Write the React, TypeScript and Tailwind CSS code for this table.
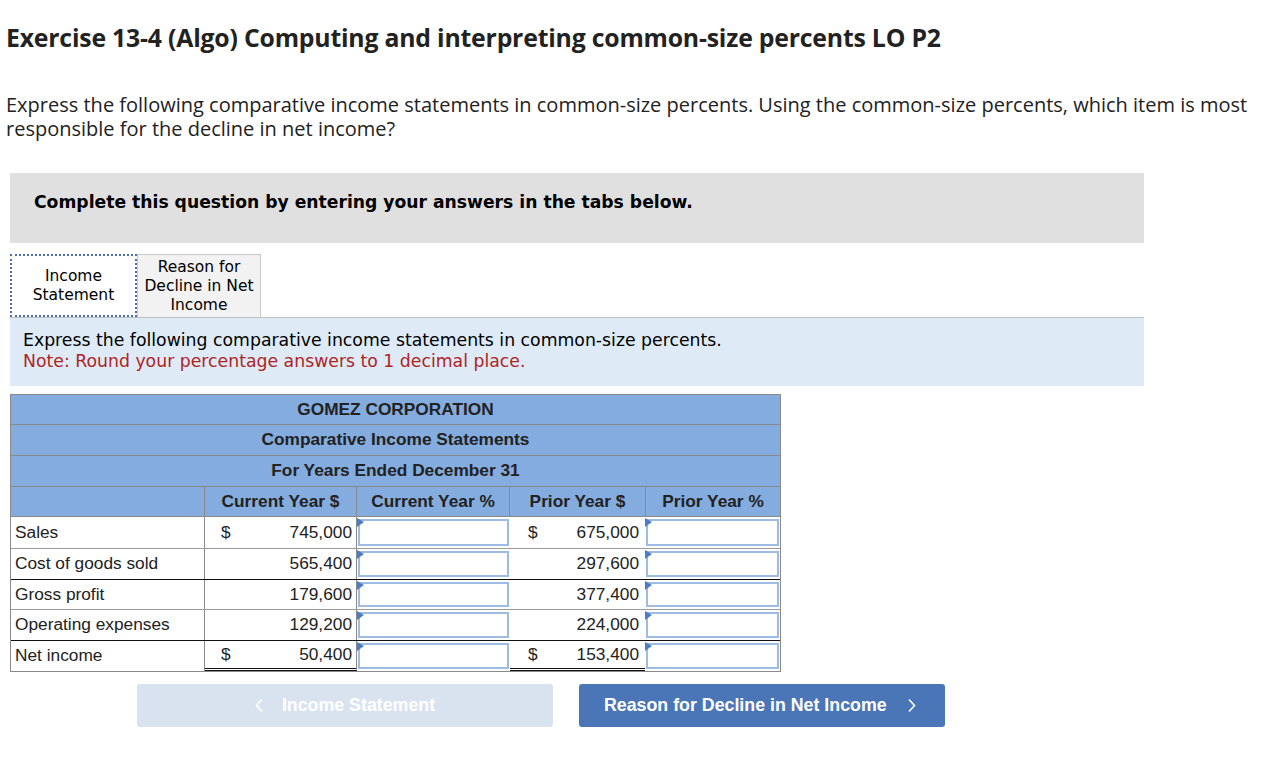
import React from 'react';

type Row = {
  label: string;
  cur: string;
  prior: string;
  dollar?: boolean;
  thickTop?: boolean;
  thickBottom?: boolean;
  short?: boolean;
};

const rows: Row[] = [
  { label: 'Sales', cur: '745,000', prior: '675,000', dollar: true },
  { label: 'Cost of goods sold', cur: '565,400', prior: '297,600' },
  { label: 'Gross profit', cur: '179,600', prior: '377,400', thickTop: true, short: true },
  { label: 'Operating expenses', cur: '129,200', prior: '224,000' },
  { label: 'Net income', cur: '50,400', prior: '153,400', dollar: true, thickTop: true, thickBottom: true },
];

const AnswerBox = () => (
  <div className="relative h-full p-[1px]">
    <div className="h-full border-2 border-[#9dbbe3] bg-white"></div>
    <svg className="absolute left-0 top-0" width="7" height="9" viewBox="0 0 7 9">
      <polygon points="0,0 7,4 0,9" fill="#4a7dc4" />
    </svg>
  </div>
);

const Chevron = ({ dir }: { dir: 'left' | 'right' }) => (
  <svg width="9" height="15" viewBox="0 0 9 15" fill="none" stroke="currentColor" strokeWidth="1.6">
    {dir === 'left' ? <polyline points="7,1.5 1.5,7.5 7,13.5" /> : <polyline points="2,1.5 7.5,7.5 2,13.5" />}
  </svg>
);

const App: React.FC = () => {
  return (
    <div className="w-[1270px] h-[770px] bg-white text-black" style={{ fontFamily: '"Open Sans", sans-serif' }}>
      <div className="pt-[22px] pl-[6px]">
        <h1 className="text-[24.8px] font-bold leading-[30px] text-[#222] tracking-[-0.2px]">
          Exercise 13-4 (Algo) Computing and interpreting common-size percents LO P2
        </h1>
        <p className="mt-[41px] text-[20px] leading-[24px] text-[#222] pr-[10px]">
          Express the following comparative income statements in common-size percents. Using the common-size percents, which item is most responsible for the decline in net income?
        </p>
      </div>

      <div className="ml-[10px] w-[1134px] mt-[32px]">
        <div className="h-[70px] bg-[#e0e0e0] pl-[24px] pt-[17px]">
          <span className="text-[17.2px] leading-[22px] font-bold text-black" style={{ fontFamily: '"DejaVu Sans", Verdana, sans-serif' }}>
            Complete this question by entering your answers in the tabs below.
          </span>
        </div>

        <div className="mt-[11px] flex items-end" style={{ fontFamily: '"DejaVu Sans", Verdana, sans-serif' }}>
          <div className="w-[127px] h-[63px] border-2 border-dotted border-[#4a6fb5] bg-white flex items-center justify-center text-center text-[15.5px] leading-[19px] text-black">
            Income<br />Statement
          </div>
          <div className="w-[124px] h-[63px] border border-[#c8c8c8] border-b-0 bg-[#f2f2f2] flex items-center justify-center text-center text-[15.5px] leading-[19px] text-black">
            Reason for<br />Decline in Net<br />Income
          </div>
        </div>

        <div className="h-[69px] bg-[#deebf7] border-t border-[#c0c0c0] pl-[13px] pt-[12px] text-[17.3px] leading-[21px]" style={{ fontFamily: '"DejaVu Sans", Verdana, sans-serif' }}>
          <div className="text-black">Express the following comparative income statements in common-size percents.</div>
          <div className="text-[#b0231e]">Note: Round your percentage answers to 1 decimal place.</div>
        </div>
      </div>

      <div className="ml-[10px] mt-[8px] w-[771px] text-[17.3px] text-[#222]" style={{ fontFamily: '"Liberation Sans", Arial, sans-serif' }}>
        <div className="border border-[#8a8a8a] bg-[#84acdf] font-bold">
          <div className="h-[30px] flex items-center justify-center border-b border-[#8a8a8a]">GOMEZ CORPORATION</div>
          <div className="h-[31px] flex items-center justify-center border-b border-[#8a8a8a]">Comparative Income Statements</div>
          <div className="h-[31px] flex items-center justify-center border-b border-[#8a8a8a]">For Years Ended December 31</div>
          <div className="h-[29px] grid grid-cols-[194px_152px_153px_135px_135px]">
            <div className="border-r border-[#8a8a8a]"></div>
            <div className="flex items-center justify-center border-r border-[#8a8a8a]">Current Year $</div>
            <div className="flex items-center justify-center border-r border-[#8a8a8a]">Current Year %</div>
            <div className="flex items-center justify-center">Prior Year $</div>
            <div className="flex items-center justify-center border-l border-[#8a8a8a]">Prior Year %</div>
          </div>
        </div>
        <div className="border-x border-b border-[#8a8a8a]">
          {rows.map((r, i) => (
            <div
              key={r.label}
              className={`${r.short ? 'h-[30px]' : 'h-[31px]'} grid grid-cols-[194px_152px_153px_135px_135px] ${i > 0 ? 'border-t' : ''} ${r.thickTop ? 'border-t-[#111]' : 'border-t-[#9a9a9a]'}`}
            >
              <div className="flex items-center pl-[4px] border-r border-[#8a8a8a]">{r.label}</div>
              <div className={`flex items-center justify-between pl-[16px] pr-[4px] border-r border-[#8a8a8a] ${r.thickBottom ? 'border-b-[3px] border-b-[#111] border-double' : ''}`}>
                <span>{r.dollar ? '$' : ''}</span>
                <span>{r.cur}</span>
              </div>
              <div className="py-[1px]">
                <AnswerBox />
              </div>
              <div className={`flex items-center justify-between pl-[18px] pr-[6px] ${r.thickBottom ? 'border-b-[3px] border-b-[#111] border-double' : ''}`}>
                <span>{r.dollar ? '$' : ''}</span>
                <span>{r.prior}</span>
              </div>
              <div className="py-[1px]">
                <AnswerBox />
              </div>
            </div>
          ))}
        </div>
      </div>

      <div className="mt-[12px] flex" style={{ fontFamily: '"Liberation Sans", Arial, sans-serif' }}>
        <button className="ml-[137px] w-[416px] h-[43px] rounded-[3px] bg-[#d9e3f0] text-white text-[17.8px] font-bold flex items-center justify-center gap-[18px]">
          <Chevron dir="left" />
          <span>Income Statement</span>
        </button>
        <button className="ml-[26px] w-[366px] h-[43px] rounded-[3px] bg-[#4a76b8] text-white text-[17.8px] font-bold flex items-center pl-[25px] gap-[20px]">
          <span>Reason for Decline in Net Income</span>
          <Chevron dir="right" />
        </button>
      </div>
    </div>
  );
};

export default App;
